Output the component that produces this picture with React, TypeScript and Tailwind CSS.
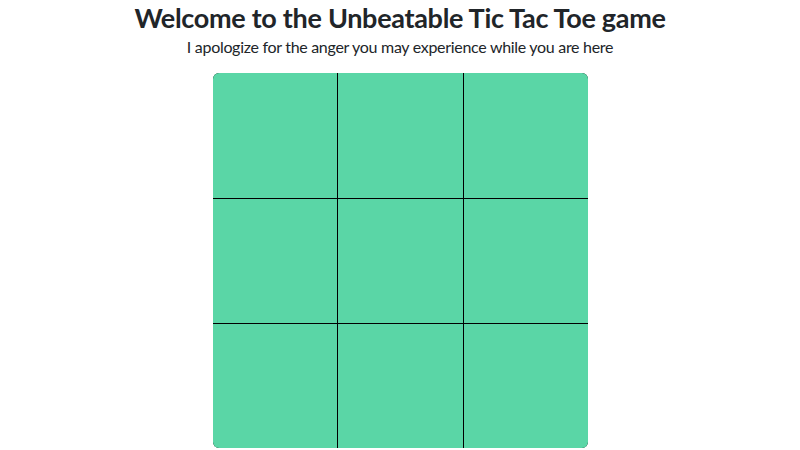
import React from 'react';

const App: React.FC = () => {
  const cells = Array.from({ length: 9 });
  return (
    <div className="w-[800px] h-[450px] bg-white flex flex-col items-center overflow-hidden" style={{ fontFamily: 'Lato, "Noto Sans", sans-serif' }}>
      <h1 className="text-[27px] leading-[34px] font-bold tracking-[-0.3px] text-[#212529] mt-[1px]">
        Welcome to the Unbeatable Tic Tac Toe game
      </h1>
      <p className="text-[16px] leading-[24px] tracking-[-0.3px] text-[#212529]">
        I apologize for the anger you may experience while you are here
      </p>
      {/* Board */}
      <div className="mt-[14px] w-[375px] h-[375px] grid grid-cols-[124.5px_124.5px_124px] grid-rows-[124.5px_124.5px_124px] gap-[1px] bg-black rounded-md overflow-hidden">
        {cells.map((_, i) => (
          <div key={i} className="bg-[#5ad6a6]" />
        ))}
      </div>
    </div>
  );
};

export default App;
